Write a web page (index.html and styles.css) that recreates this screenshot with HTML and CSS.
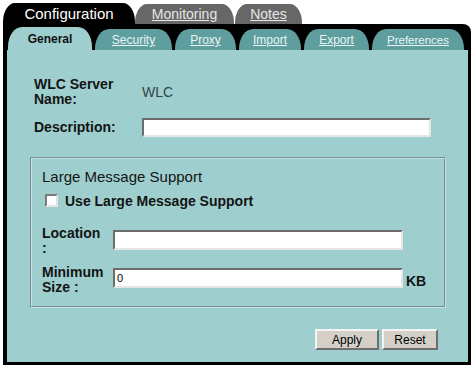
FILE: index.html
```html
<!DOCTYPE html>
<html lang="en">
<head>
	<meta charset="UTF-8">
	<title>WLC Configuration</title>
	<link rel="stylesheet" href="styles.css">
</head>
<body>
	<div class="window">
		<nav class="tabs-main">
			<span class="tab-main config active">Configuration</span>
			<a class="tab-main monitoring" href="#">Monitoring</a>
			<a class="tab-main notes" href="#">Notes</a>
		</nav>
		<div class="frame">
			<nav class="tabs-sub">
				<span class="tab-sub general active">General</span>
				<a class="tab-sub security" href="#">Security</a>
				<a class="tab-sub proxy" href="#">Proxy</a>
				<a class="tab-sub import" href="#">Import</a>
				<a class="tab-sub export" href="#">Export</a>
				<a class="tab-sub prefs" href="#">Preferences</a>
			</nav>
			<form class="panel">
				<div class="row">
					<span class="label">WLC Server Name:</span>
					<span class="value">WLC</span>
				</div>
				<div class="row desc">
					<label class="label" for="desc">Description:</label>
					<input type="text" id="desc" class="text wide">
				</div>

				<div class="group">
					<div class="group-title">Large Message Support</div>
					<label class="check-row">
						<input type="checkbox" class="check">
						<span>Use Large Message Support</span>
					</label>
					<div class="field">
						<label class="field-label" for="loc">Location :</label>
						<input type="text" id="loc" class="text">
					</div>
					<div class="field size">
						<label class="field-label" for="min">Minimum Size :</label>
						<input type="text" id="min" class="text" value="0">
						<span class="unit">KB</span>
					</div>
				</div>

				<div class="actions">
					<button type="button" class="btn apply">Apply</button>
					<button type="reset" class="btn reset">Reset</button>
				</div>
			</form>
		</div>
	</div>
</body>
</html>
```

FILE: styles.css
```css
body {
	margin: 0;
	background: #fff;
	font-family: "Liberation Sans", Arial, sans-serif;
}
.window {
	width: 468px;
	margin: 2px 0 0 3px;
}

/* top level tabs */
.tabs-main {
	display: flex;
	align-items: flex-end;
	height: 22px;
}
.tab-main {
	display: flex;
	align-items: center;
	justify-content: center;
	height: 20px;
	background: #676767;
	color: #e6e6e6;
	font-size: 14px;
	text-decoration: underline;
	border-radius: 12px 12px 0 0 / 19px 19px 0 0;
}
.tab-main.active {
	background: #000;
	color: #fff;
	font-size: 15px;
	height: 21px;
	text-decoration: none;
}
.tab-main.config     { width: 132px; }
.tab-main.monitoring { width: 99px; }
.tab-main.notes      { width: 67px; margin-left: 1px; }

/* black frame + sub tabs */
.frame {
	background: #000;
	border-top-right-radius: 8px;
	padding: 3px 3px 3px 4px;
}
.tabs-sub {
	display: flex;
	align-items: flex-end;
	gap: 3px;
	height: 23px;
	padding-left: 1px;
}
.tab-sub {
	display: flex;
	align-items: center;
	justify-content: center;
	height: 21px;
	padding-top: 1px;
	box-sizing: border-box;
	background: #5f9e9f;
	color: #e9f5f5;
	font-size: 12px;
	text-decoration: underline;
	border-radius: 14px 14px 0 0 / 20px 20px 0 0;
}
.tab-sub.active {
	height: 23px;
	background: #9ecfce;
	color: #111;
	font-weight: bold;
	text-decoration: none;
}
.tab-sub.general  { width: 84px; }
.tab-sub.security { width: 77px; }
.tab-sub.proxy    { width: 61px; }
.tab-sub.import   { width: 62px; }
.tab-sub.export   { width: 65px; }
.tab-sub.prefs    { width: 92px; font-size: 11.5px; }

/* panel */
.panel {
	background: #9ecfce;
	height: 312px;
	box-sizing: border-box;
	padding: 27px 22px 0 23px;
	margin: 0;
	color: #141414;
}
.row {
	display: flex;
	align-items: center;
	margin-left: 4px;
}
.row .label {
	width: 108px;
	font-size: 14px;
	font-weight: bold;
	line-height: 15px;
}
.row .value {
	font-size: 14px;
	color: #334444;
}
.row.desc { margin-top: 11px; }

.text {
	box-sizing: border-box;
	width: 290px;
	height: 20px;
	margin: 0;
	padding: 0 2px;
	background: #fff;
	border: 2px solid;
	border-color: #6c6c6c #e6e6e6 #e6e6e6 #6c6c6c;
	font: 11px "Liberation Sans", Arial, sans-serif;
	color: #000;
}
.text.wide {
	width: 289px;
	height: 19px;
}

/* large message group */
.group {
	margin-top: 20px;
	border: 2px groove #c4e2e2;
	padding: 9px 10px 11px 10px;
}
.group-title {
	font-size: 15px;
	line-height: 17px;
}
.check-row {
	display: flex;
	align-items: center;
	height: 17px;
	margin-top: 7px;
	font-size: 14px;
	font-weight: bold;
}
.check {
	appearance: none;
	-webkit-appearance: none;
	width: 13px;
	height: 13px;
	margin: 0 7px 0 3px;
	background: #fff;
	border: 2px solid;
	border-color: #7a7a7a #e4e4e4 #e4e4e4 #7a7a7a;
}
.field {
	display: flex;
	align-items: flex-start;
	margin-top: 17px;
}
.field-label {
	width: 64px;
	margin-right: 7px;
	font-size: 14px;
	font-weight: bold;
	line-height: 15px;
}
.field .text { margin-top: 4px; }
.field.size { margin-top: 9px; }
.field.size .text { margin-top: 3px; }
.unit {
	margin: 9px 0 0 3px;
	font-size: 14px;
	font-weight: bold;
	line-height: 15px;
}

/* buttons */
.actions {
	display: flex;
	justify-content: flex-end;
	gap: 3px;
	margin: 21px 8px 0 0;
}
.btn {
	height: 21px;
	padding: 0;
	background: #d4d0c8;
	border: 2px solid;
	border-color: #f4f4f4 #6e6e6e #6e6e6e #f4f4f4;
	font: 12px "Liberation Sans", Arial, sans-serif;
	color: #000;
}
.btn.apply { width: 64px; }
.btn.reset { width: 56px; }
```
